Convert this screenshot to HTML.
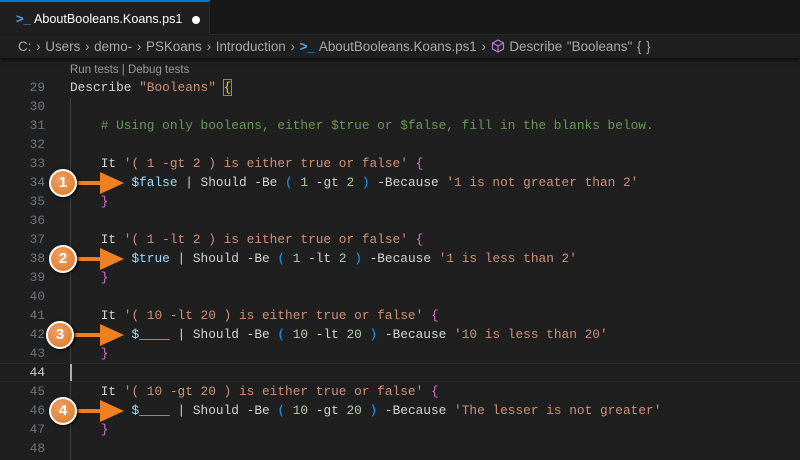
<!DOCTYPE html>
<html><head><meta charset="utf-8"><style>
*{margin:0;padding:0;box-sizing:border-box}
body{width:800px;height:460px;overflow:hidden;background:#1f1f1f;font-family:"Liberation Sans",sans-serif;position:relative}
.tabbar{position:absolute;left:0;top:0;width:800px;height:35px;background:#181818;border-bottom:1px solid #2b2b2b}
.tab{position:absolute;left:0;top:0;width:210px;height:36px;background:#1f1f1f;border-top:2px solid #0078d4;border-right:1px solid #2b2b2b;color:#fff;font-size:12.6px}
.crumb{position:absolute;left:0;top:36px;width:800px;height:22px;color:#a9a9a9;font-size:13.4px;line-height:22px;padding-left:18px;white-space:nowrap;box-shadow:0 2px 4px #000a;background:#1f1f1f;word-spacing:1px}
.code{position:absolute;left:0;top:78px;font-family:"Liberation Mono",monospace;font-size:12.8px;white-space:pre}
.ln{position:absolute;left:0;width:45px;text-align:right;color:#6e7681;height:19px;line-height:19px}
.tx{position:absolute;left:70px;height:19px;line-height:19px;color:#d4d4d4}
.s{color:#ce9178}.c{color:#6a9955}.v{color:#9cdcfe}.n{color:#b5cea8}.p{color:#179fff}.b{color:#da70d6}
.call{position:absolute;width:28px;height:28px;border-radius:50%;background:radial-gradient(circle at 40% 35%,#f0a060,#d9782c);border:2px solid #fff;color:#fff;font-weight:bold;font-size:15px;text-align:center;line-height:24px;box-shadow:1px 1px 3px #000}
</style></head><body>
<div class="tabbar"></div>
<div class="tab"><span style="position:absolute;left:16px;top:9px;color:#4fa7e6;font-weight:bold;font-size:13px">&gt;_</span><span style="position:absolute;left:34px;top:10px">AboutBooleans.Koans.ps1</span><span style="position:absolute;left:192px;top:14px;width:8px;height:8px;border-radius:50%;background:#fff"></span></div>
<div class="crumb">C: › Users › demo- › PSKoans › Introduction › <span style="color:#4fa7e6;font-weight:bold">&gt;_</span> AboutBooleans.Koans.ps1 › <svg width="14" height="14" viewBox="0 0 14 14" style="vertical-align:-2px"><path d="M7 1L12.5 4v6L7 13 1.5 10V4z M1.5 4L7 7l5.5-3 M7 7v6" fill="none" stroke="#b180d7" stroke-width="1.2"/></svg> Describe "Booleans" { }</div>
<div style="position:absolute;left:70px;top:64px;color:#999;font-size:11.5px">Run tests | Debug tests</div>
<div style="position:absolute;left:70px;top:98px;width:1px;height:362px;background:#404040"></div>
<div style="position:absolute;left:0;top:363px;width:800px;height:19px;border-top:1px solid #282828;border-bottom:1px solid #282828"></div>
<div style="position:absolute;left:70px;top:364px;width:2px;height:17px;background:#aeafad"></div>
<div class="code">
<div class="ln" style="top:0">29</div><div class="tx" style="top:0">Describe <span class="s">"Booleans"</span> <span style="color:#ffd700;outline:1px solid #888">{</span></div>
<div class="ln" style="top:19px">30</div>
<div class="ln" style="top:38px">31</div><div class="tx c" style="top:38px">    # Using only booleans, either $true or $false, fill in the blanks below.</div>
<div class="ln" style="top:57px">32</div>
<div class="ln" style="top:76px">33</div><div class="tx" style="top:76px">    It <span class="s">'( 1 -gt 2 ) is either true or false'</span> <span class="b">{</span></div>
<div class="ln" style="top:95px">34</div><div class="tx" style="top:95px">        <span class="v">$false</span> | Should -Be <span class="p">(</span> <span class="n">1</span> -gt <span class="n">2</span> <span class="p">)</span> -Because <span class="s">'1 is not greater than 2'</span></div>
<div class="ln" style="top:114px">35</div><div class="tx" style="top:114px">    <span class="b">}</span></div>
<div class="ln" style="top:133px">36</div>
<div class="ln" style="top:152px">37</div><div class="tx" style="top:152px">    It <span class="s">'( 1 -lt 2 ) is either true or false'</span> <span class="b">{</span></div>
<div class="ln" style="top:171px">38</div><div class="tx" style="top:171px">        <span class="v">$true</span> | Should -Be <span class="p">(</span> <span class="n">1</span> -lt <span class="n">2</span> <span class="p">)</span> -Because <span class="s">'1 is less than 2'</span></div>
<div class="ln" style="top:190px">39</div><div class="tx" style="top:190px">    <span class="b">}</span></div>
<div class="ln" style="top:209px">40</div>
<div class="ln" style="top:228px">41</div><div class="tx" style="top:228px">    It <span class="s">'( 10 -lt 20 ) is either true or false'</span> <span class="b">{</span></div>
<div class="ln" style="top:247px">42</div><div class="tx" style="top:247px">        <span class="v">$____</span> | Should -Be <span class="p">(</span> <span class="n">10</span> -lt <span class="n">20</span> <span class="p">)</span> -Because <span class="s">'10 is less than 20'</span></div>
<div class="ln" style="top:266px">43</div><div class="tx" style="top:266px">    <span class="b">}</span></div>
<div class="ln" style="top:285px;color:#ccc">44</div>
<div class="ln" style="top:304px">45</div><div class="tx" style="top:304px">    It <span class="s">'( 10 -gt 20 ) is either true or false'</span> <span class="b">{</span></div>
<div class="ln" style="top:323px">46</div><div class="tx" style="top:323px">        <span class="v">$____</span> | Should -Be <span class="p">(</span> <span class="n">10</span> -gt <span class="n">20</span> <span class="p">)</span> -Because <span class="s">'The lesser is not greater'</span></div>
<div class="ln" style="top:342px">47</div><div class="tx" style="top:342px">    <span class="b">}</span></div>
<div class="ln" style="top:361px">48</div>
</div>
<svg style="position:absolute;left:0;top:0" width="800" height="460">
<g fill="#f07f22">
<rect x="76" y="181" width="26" height="4"/><path d="M100 172L124 183L100 194z"/>
<rect x="76" y="257" width="26" height="4"/><path d="M100 248L124 259L100 270z"/>
<rect x="74" y="333" width="28" height="4"/><path d="M100 324L124 335L100 346z"/>
<rect x="76" y="409" width="26" height="4"/><path d="M100 400L124 411L100 422z"/>
</g></svg>
<div class="call" style="left:49px;top:169px">1</div>
<div class="call" style="left:49px;top:245px">2</div>
<div class="call" style="left:46px;top:321px">3</div>
<div class="call" style="left:49px;top:397px">4</div>
</body></html>
